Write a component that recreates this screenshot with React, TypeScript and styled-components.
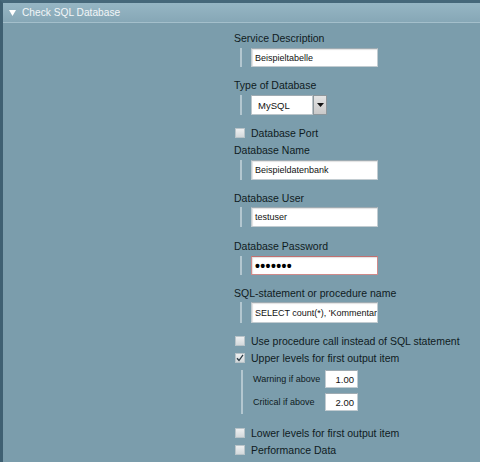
import React from 'react';
import styled, { createGlobalStyle } from 'styled-components';

const Global = createGlobalStyle`
  html, body { margin: 0; padding: 0; background: #7b9dac; }
  body { font-family: "Liberation Sans", Arial, sans-serif; }
`;

const Frame = styled.div`
  width: 480px;
  height: 462px;
  box-sizing: border-box;
  border-left: 3px solid #3f6072;
  border-top: 3px solid #46687a;
  background: #7b9dac;
  display: flex;
  flex-direction: column;
  overflow: hidden;
`;

const Header = styled.div`
  height: 19px;
  display: flex;
  align-items: center;
  gap: 6px;
  padding-left: 6px;
  background: linear-gradient(#96b6c4, #86a7b6);
  border-bottom: 1px solid #a4bfcb;
  color: #f2f6f8;
  font-size: 10.2px;
`;

const Body = styled.div`
  flex: 1;
  padding: 8px 0 0 231px;
  display: flex;
  flex-direction: column;
`;

const Field = styled.div<{ $mt?: number }>`
  display: flex;
  flex-direction: column;
  margin-top: ${(p) => p.$mt ?? 0}px;
`;

const Label = styled.div`
  font-size: 10.5px;
  line-height: 14px;
  color: #0f1b22;
  white-space: nowrap;
`;

const ControlRow = styled.div<{ $mt?: number }>`
  display: flex;
  align-items: stretch;
  margin-top: ${(p) => p.$mt ?? 3}px;
  padding-left: 6px;
`;

const Bar = styled.div`
  width: 2px;
  background: #b3c7d0;
  margin-right: 9px;
`;

const TextBox = styled.div<{ $h?: number; $error?: boolean }>`
  width: 127px;
  height: ${(p) => p.$h ?? 19}px;
  box-sizing: border-box;
  background: #fff;
  border: 1px solid ${(p) => (p.$error ? '#cf8a8a' : '#c2ccd1')};
  border-top-color: ${(p) => (p.$error ? '#c07070' : '#9eabb2')};
  box-shadow: inset 1px 1px 1px rgba(0, 0, 0, 0.12);
  display: flex;
  align-items: center;
  padding-left: 3px;
  font-size: 9px;
  color: #111;
  white-space: nowrap;
  overflow: hidden;
`;

const Dots = styled.span`
  font-size: 14px;
  line-height: 1;
  letter-spacing: 0.4px;
  font-weight: bold;
  color: #000;
`;

const SelectWrap = styled.div`
  display: flex;
  height: 20px;
`;

const SelectBox = styled.div`
  width: 62px;
  box-sizing: border-box;
  background: #fff;
  border: 1px solid #bcc6cb;
  border-top-color: #9eabb2;
  display: flex;
  align-items: center;
  padding-left: 6px;
  font-size: 9.5px;
  color: #111;
`;

const SelectButton = styled.div`
  width: 14px;
  box-sizing: border-box;
  background: linear-gradient(#e4e4e4, #c9c9c9);
  border: 1px solid #8d979c;
  display: flex;
  align-items: center;
  justify-content: center;
`;

const CheckRow = styled.div<{ $mt?: number }>`
  display: flex;
  align-items: center;
  height: 14px;
  margin-top: ${(p) => p.$mt ?? 0}px;
`;

const Box = styled.div`
  width: 10px;
  height: 10px;
  margin-left: 1px;
  margin-right: 6px;
  box-sizing: border-box;
  background: linear-gradient(#eef0f1, #d3d9dc);
  border: 1px solid #b9c4c9;
  display: flex;
  align-items: center;
  justify-content: center;
`;

const Nested = styled.div`
  display: flex;
  margin-top: 5px;
  padding-left: 7px;
`;

const NestedBar = styled.div`
  width: 2px;
  background: #b3c7d0;
  margin-right: 10px;
`;

const NestedRows = styled.div`
  display: flex;
  flex-direction: column;
  gap: 5px;
  padding-bottom: 3px;
`;

const LevelRow = styled.div`
  display: flex;
  align-items: center;
  height: 18px;
`;

const LevelLabel = styled.div`
  width: 72px;
  font-size: 9px;
  color: #0f1b22;
  white-space: nowrap;
`;

const NumBox = styled.div`
  width: 33px;
  height: 18px;
  box-sizing: border-box;
  background: #fff;
  border: 1px solid #c2ccd1;
  border-top-color: #9eabb2;
  font-size: 9.5px;
  color: #111;
  display: flex;
  align-items: center;
  justify-content: flex-end;
  padding-right: 3px;
`;

const Check = ({ checked }: { checked?: boolean }) => (
  <Box>
    {checked && (
      <svg width="8" height="8" viewBox="0 0 8 8">
        <path d="M1 4.2 L3 6.5 L7 0.8" fill="none" stroke="#2a3a44" strokeWidth="1.3" />
      </svg>
    )}
  </Box>
);

export default function App() {
  return (
    <>
      <Global />
      <Frame>
        <Header>
          <svg width="7" height="6" viewBox="0 0 7 6">
            <path d="M0 0 H7 L3.5 6 Z" fill="#ffffff" />
          </svg>
          <span>Check SQL Database</span>
        </Header>
        <Body>
          <Field>
            <Label>Service Description</Label>
            <ControlRow>
              <Bar />
              <TextBox>Beispieltabelle</TextBox>
            </ControlRow>
          </Field>
          <Field $mt={11}>
            <Label>Type of Database</Label>
            <ControlRow $mt={3}>
              <Bar />
              <SelectWrap>
                <SelectBox>MySQL</SelectBox>
                <SelectButton>
                  <svg width="7" height="4" viewBox="0 0 7 4">
                    <path d="M0 0 H7 L3.5 4 Z" fill="#111" />
                  </svg>
                </SelectButton>
              </SelectWrap>
            </ControlRow>
          </Field>
          <CheckRow $mt={11}>
            <Check />
            <Label>Database Port</Label>
          </CheckRow>
          <Field $mt={3}>
            <Label>Database Name</Label>
            <ControlRow>
              <Bar />
              <TextBox $h={20}>Beispieldatenbank</TextBox>
            </ControlRow>
          </Field>
          <Field $mt={11}>
            <Label>Database User</Label>
            <ControlRow $mt={2}>
              <Bar />
              <TextBox $h={20}>testuser</TextBox>
            </ControlRow>
          </Field>
          <Field $mt={12}>
            <Label>Database Password</Label>
            <ControlRow>
              <Bar />
              <TextBox $error>
                <Dots>•••••••</Dots>
              </TextBox>
            </ControlRow>
          </Field>
          <Field $mt={11}>
            <Label>SQL-statement or procedure name</Label>
            <ControlRow $mt={2}>
              <Bar />
              <TextBox $h={21}>SELECT count(*), 'Kommentar</TextBox>
            </ControlRow>
          </Field>
          <CheckRow $mt={11}>
            <Check />
            <Label>Use procedure call instead of SQL statement</Label>
          </CheckRow>
          <CheckRow $mt={3}>
            <Check checked />
            <Label>Upper levels for first output item</Label>
          </CheckRow>
          <Nested>
            <NestedBar />
            <NestedRows>
              <LevelRow>
                <LevelLabel>Warning if above</LevelLabel>
                <NumBox>1.00</NumBox>
              </LevelRow>
              <LevelRow>
                <LevelLabel>Critical if above</LevelLabel>
                <NumBox>2.00</NumBox>
              </LevelRow>
            </NestedRows>
          </Nested>
          <CheckRow $mt={12}>
            <Check />
            <Label>Lower levels for first output item</Label>
          </CheckRow>
          <CheckRow $mt={3}>
            <Check />
            <Label>Performance Data</Label>
          </CheckRow>
        </Body>
      </Frame>
    </>
  );
}
